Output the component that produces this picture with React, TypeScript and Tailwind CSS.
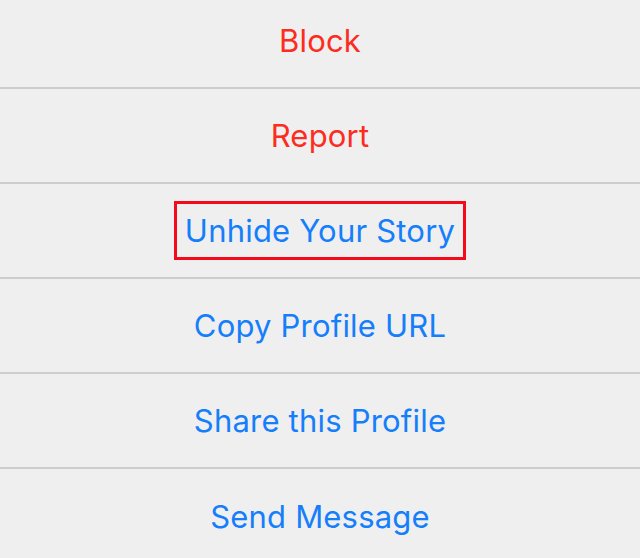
const rows: { label: string; tone: "red" | "blue"; boxed?: boolean }[] = [
  { label: "Block", tone: "red" },
  { label: "Report", tone: "red" },
  { label: "Unhide Your Story", tone: "blue", boxed: true },
  { label: "Copy Profile URL", tone: "blue" },
  { label: "Share this Profile", tone: "blue" },
  { label: "Send Message", tone: "blue" },
];

export default function App() {
  return (
    <div
      className="w-[640px] h-[558px] overflow-hidden bg-[#efefef]"
      style={{ fontFamily: "Inter, 'Noto Sans', sans-serif" }}
    >
      <div className="-mt-[6px] flex flex-col">
        {rows.map((r, i) => (
          <div
            key={r.label}
            className={`h-[95px] flex items-center justify-center ${
              i < rows.length - 1 ? "border-b-2 border-[#cdcdcd]" : ""
            }`}
          >
            <span
              className={`text-[31px] leading-none tracking-[0.2px] ${
                r.tone === "red" ? "text-[#fc2c20]" : "text-[#157efb]"
              } ${r.boxed ? "border-[3px] border-[#f50a1c] px-[8px] py-[11px]" : ""}`}
            >
              {r.label}
            </span>
          </div>
        ))}
      </div>
    </div>
  );
}
